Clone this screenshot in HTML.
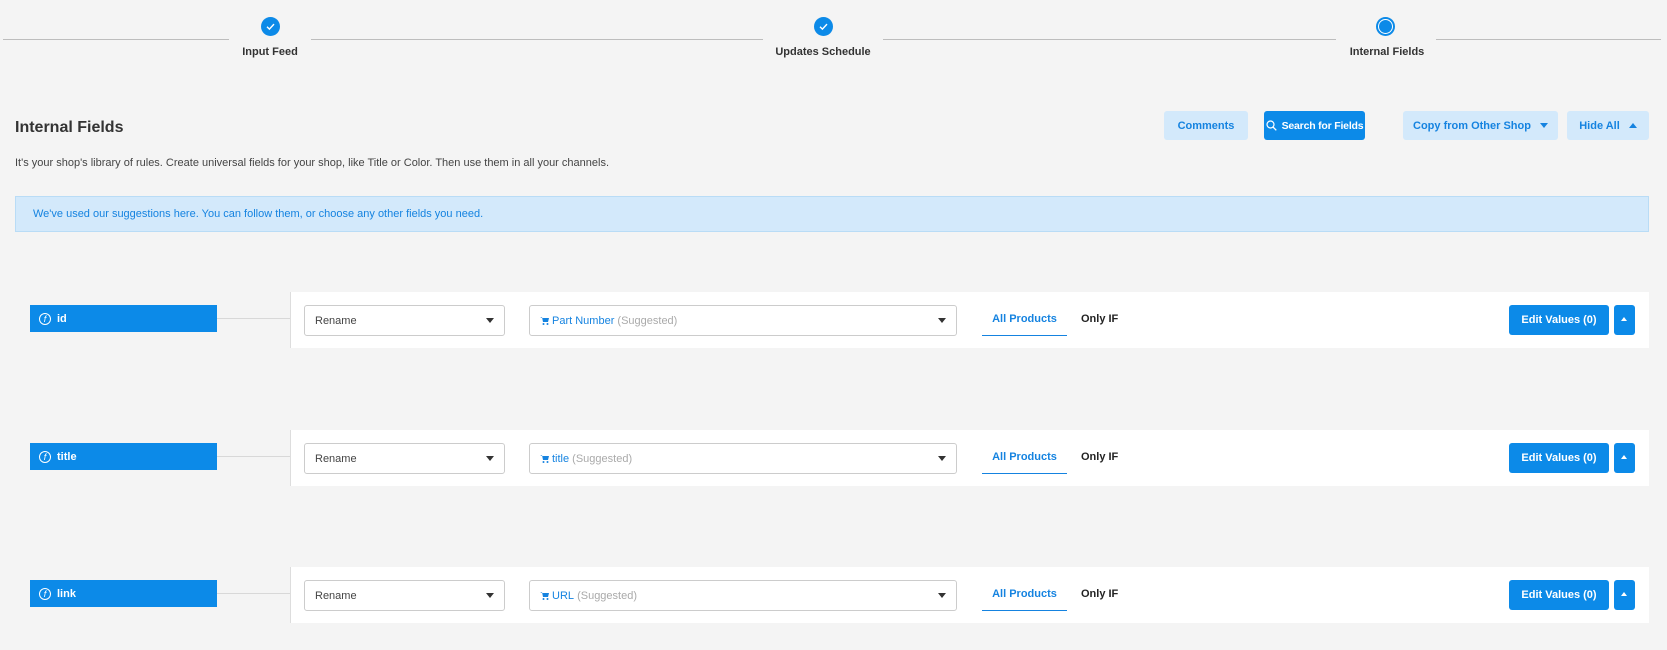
<!DOCTYPE html>
<html><head><meta charset="utf-8"><style>
*{box-sizing:border-box;margin:0;padding:0}
body{width:1667px;height:650px;background:#f4f4f4;font-family:"Liberation Sans",sans-serif;position:relative;overflow:hidden;color:#333}
.a{position:absolute}
.line{position:absolute;top:39px;height:1px;background:#bdbdbd}
.circ{position:absolute;top:17px;width:19px;height:19px;border-radius:50%;background:#0c8ae8}
.lbl{position:absolute;top:46px;font-size:11px;font-weight:bold;color:#333;transform:translateX(-50%);white-space:nowrap}
.btn{position:absolute;top:111px;height:29px;border-radius:3px;font-size:11px;font-weight:bold;display:flex;align-items:center;justify-content:center;background:#d3e9fb;color:#1583e0;white-space:nowrap}
.tag{position:absolute;left:30px;width:187px;height:27px;background:#0c8ae8;color:#fff;font-size:11px;font-weight:bold;display:flex;align-items:center;padding-left:9px}
.tag i{display:inline-block;width:12px;height:12px;border:1px solid #fff;border-radius:50%;font-size:9px;font-style:italic;line-height:10px;text-align:center;margin-right:6px;font-weight:normal}
.conn{position:absolute;left:217px;width:73px;height:1px;background:#d8d8d8}
.panel{position:absolute;left:290px;width:1359px;height:56px;background:#fff;border-left:1px solid #ddd}
.sel{position:absolute;top:13px;height:31px;border:1px solid #ccc;border-radius:3px;font-size:11px;display:flex;align-items:center;padding-left:10px;color:#444;white-space:nowrap}
.sel:after{content:"";position:absolute;right:10px;top:12px;border:4px solid transparent;border-top:5px solid #333;border-bottom:0}
.ap{position:absolute;left:691px;top:13px;width:85px;height:31px;border-bottom:1px solid #1583e0;font-size:11px;font-weight:bold;color:#1583e0;text-align:center;line-height:28px}
.oi{position:absolute;left:790px;top:13px;font-size:11px;font-weight:bold;color:#222;line-height:28px}
.ev{position:absolute;left:1218px;top:13px;width:100px;height:30px;background:#0c8ae8;border-radius:3px;color:#fff;font-size:11px;font-weight:bold;display:flex;align-items:center;justify-content:center}
.cb{position:absolute;left:1323px;top:13px;width:21px;height:30px;background:#0c8ae8;border-radius:3px}
.cb:after{content:"";position:absolute;left:7px;top:12px;border:3.5px solid transparent;border-bottom:4px solid #fff;border-top:0}
.cart{display:inline-block;width:9px;height:8px;margin-right:3px}
</style></head><body>
<div class="line" style="left:3px;width:226px"></div>
<div class="line" style="left:311px;width:452px"></div>
<div class="line" style="left:883px;width:453px"></div>
<div class="line" style="left:1436px;width:225px"></div>
<div class="circ" style="left:261px"><svg width="19" height="19"><path d="M6 9.8l2.4 2.3 4.6-5" stroke="#fff" stroke-width="1.4" fill="none"/></svg></div>
<div class="circ" style="left:814px"><svg width="19" height="19"><path d="M6 9.8l2.4 2.3 4.6-5" stroke="#fff" stroke-width="1.4" fill="none"/></svg></div>
<div class="circ" style="left:1376px"><div style="position:absolute;left:2px;top:2px;width:15px;height:15px;border-radius:50%;border:1.3px solid #fff"></div></div>
<div class="lbl" style="left:270px">Input Feed</div>
<div class="lbl" style="left:823px">Updates Schedule</div>
<div class="lbl" style="left:1387px">Internal Fields</div>

<div class="a" style="left:15px;top:119px;font-size:16px;font-weight:bold;color:#333">Internal Fields</div>
<div class="a" style="left:15px;top:157px;font-size:11px;color:#444">It's your shop's library of rules. Create universal fields for your shop, like Title or Color. Then use them in all your channels.</div>

<div class="btn" style="left:1164px;width:84px">Comments</div>
<div class="btn" style="left:1264px;width:101px;background:#0c8ae8;color:#fff;font-size:10.5px;letter-spacing:-0.2px"><svg width="11" height="11" style="margin-right:5px;flex:none"><circle cx="4.5" cy="4.5" r="3.5" stroke="#fff" stroke-width="1.2" fill="none"/><path d="M7 7l3.3 3.3" stroke="#fff" stroke-width="1.3"/></svg>Search for Fields</div>
<div class="btn" style="left:1403px;width:155px">Copy from Other Shop<span style="margin-left:9px;border:4px solid transparent;border-top:5px solid #1583e0;border-bottom:0"></span></div>
<div class="btn" style="left:1567px;width:82px">Hide All<span style="margin-left:9px;border:4px solid transparent;border-bottom:5px solid #1583e0;border-top:0"></span></div>

<div class="a" style="left:15px;top:196px;width:1634px;height:36px;background:#d3e9fb;border:1px solid #b9dcf6;font-size:11px;color:#1583e0;padding:11px 0 0 17px">We've used our suggestions here. You can follow them, or choose any other fields you need.</div>

<div class="tag" style="top:305px"><i>f</i>id</div><div class="conn" style="top:318px"></div>
<div class="panel" style="top:292px">
<div class="sel" style="left:13px;width:201px">Rename</div>
<div class="sel" style="left:238px;width:428px;color:#1583e0"><svg class="cart" viewBox="0 0 9 8"><path d="M0 0h2l1 5h5l1-4H2.5" fill="#1583e0"/><circle cx="3.5" cy="7" r="1" fill="#1583e0"/><circle cx="7.5" cy="7" r="1" fill="#1583e0"/></svg>Part Number<span style="color:#aaa">&nbsp;(Suggested)</span></div>
<div class="ap">All Products</div><div class="oi">Only IF</div>
<div class="ev">Edit Values (0)</div><div class="cb"></div>
</div>

<div class="tag" style="top:443px"><i>f</i>title</div><div class="conn" style="top:456px"></div>
<div class="panel" style="top:430px">
<div class="sel" style="left:13px;width:201px">Rename</div>
<div class="sel" style="left:238px;width:428px;color:#1583e0"><svg class="cart" viewBox="0 0 9 8"><path d="M0 0h2l1 5h5l1-4H2.5" fill="#1583e0"/><circle cx="3.5" cy="7" r="1" fill="#1583e0"/><circle cx="7.5" cy="7" r="1" fill="#1583e0"/></svg>title<span style="color:#aaa">&nbsp;(Suggested)</span></div>
<div class="ap">All Products</div><div class="oi">Only IF</div>
<div class="ev">Edit Values (0)</div><div class="cb"></div>
</div>

<div class="tag" style="top:580px"><i>f</i>link</div><div class="conn" style="top:593px"></div>
<div class="panel" style="top:567px">
<div class="sel" style="left:13px;width:201px">Rename</div>
<div class="sel" style="left:238px;width:428px;color:#1583e0"><svg class="cart" viewBox="0 0 9 8"><path d="M0 0h2l1 5h5l1-4H2.5" fill="#1583e0"/><circle cx="3.5" cy="7" r="1" fill="#1583e0"/><circle cx="7.5" cy="7" r="1" fill="#1583e0"/></svg>URL<span style="color:#aaa">&nbsp;(Suggested)</span></div>
<div class="ap">All Products</div><div class="oi">Only IF</div>
<div class="ev">Edit Values (0)</div><div class="cb"></div>
</div>
</body></html>
